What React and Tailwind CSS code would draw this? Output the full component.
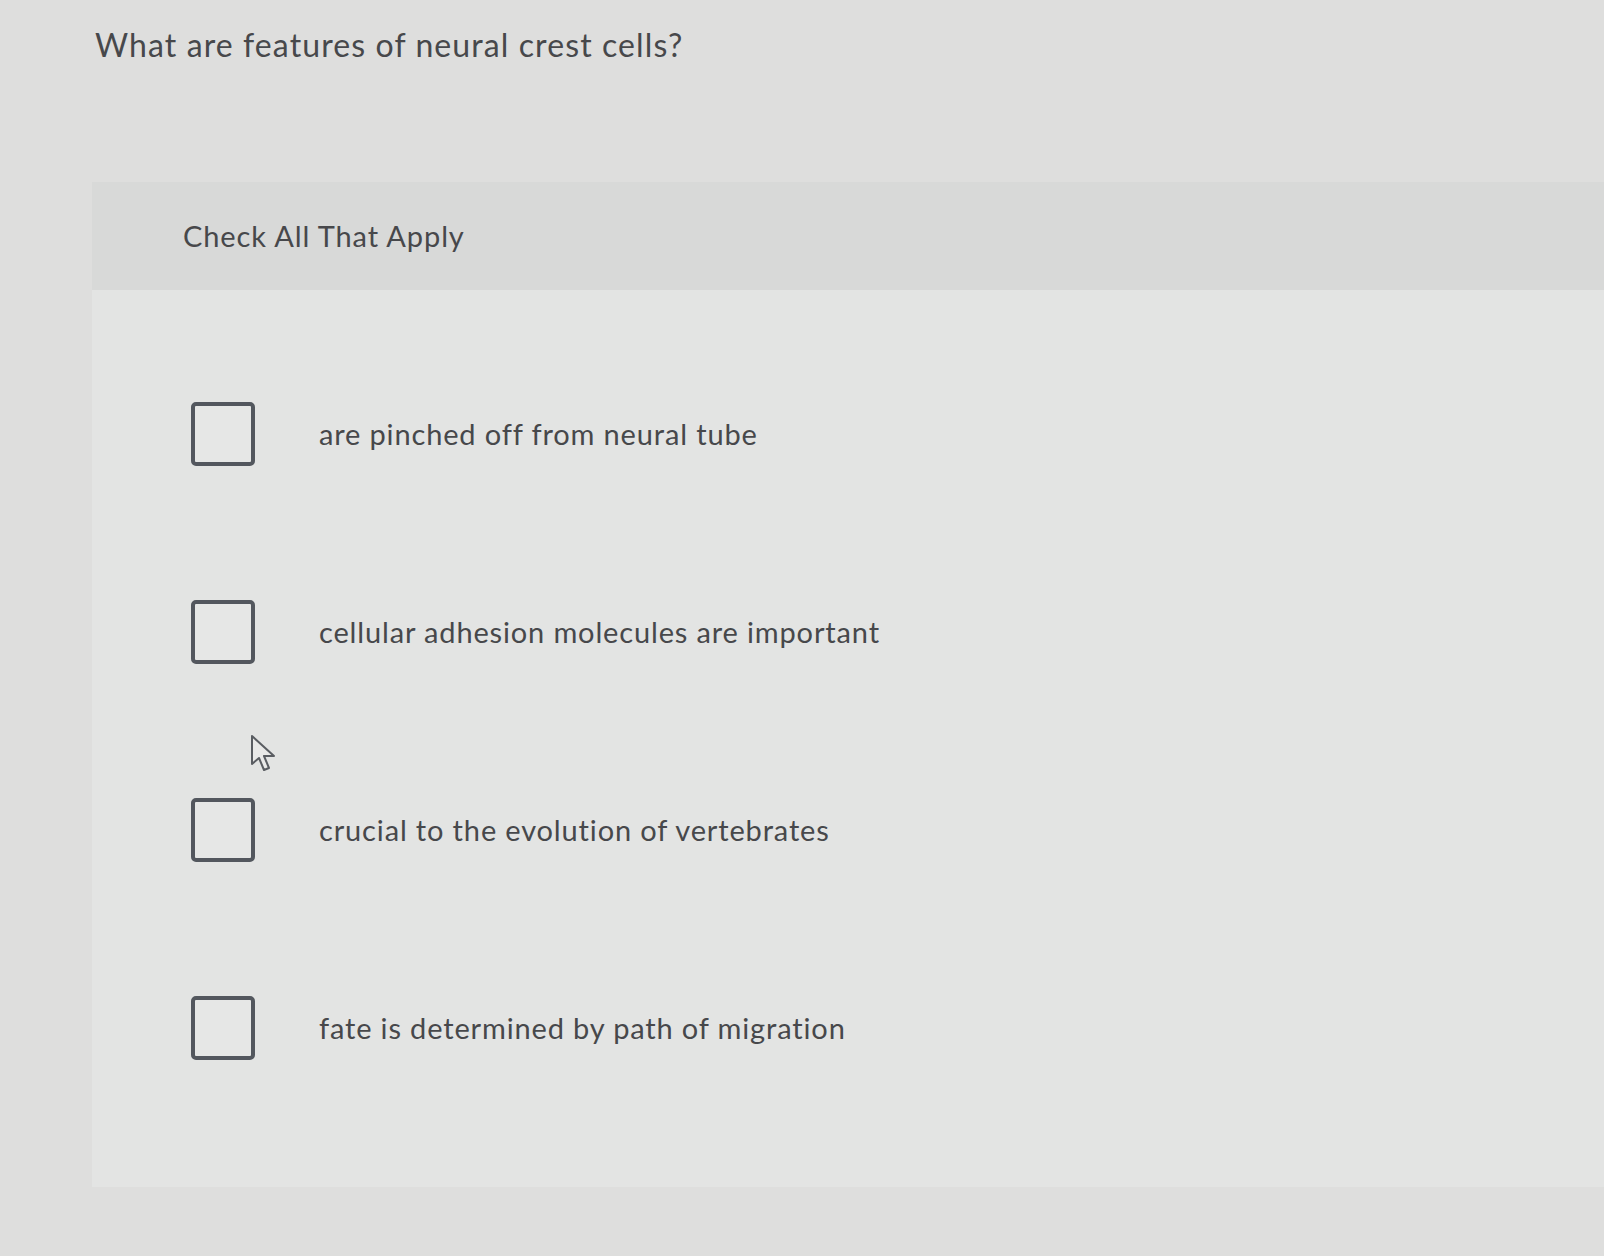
const options = [
  "are pinched off from neural tube",
  "cellular adhesion molecules are important",
  "crucial to the evolution of vertebrates",
  "fate is determined by path of migration",
];

function Cursor() {
  return (
    <svg
      className="absolute left-[250px] top-[734px]"
      width="30"
      height="40"
      viewBox="0 0 30 40"
      fill="none"
    >
      <path
        d="M2 2 L2 30 L9 24 L14 36 L19 34 L14 22 L24 22 Z"
        fill="#e9e9e8"
        stroke="#5a5d62"
        strokeWidth="2"
        strokeLinejoin="round"
      />
    </svg>
  );
}

export default function App() {
  return (
    <div
      className="relative min-h-[1256px] w-full overflow-hidden bg-[#dededd] pt-[25px] text-[#47484b]"
      style={{ fontFamily: "Lato, 'Open Sans', sans-serif" }}
    >
      <h1 className="pl-[95px] text-[32px] leading-[40px] font-normal tracking-[1.1px]">
        What are features of neural crest cells?
      </h1>

      <div className="mt-[117px] ml-[92px] bg-[#e3e4e3]">
        <div className="h-[108px] bg-[#d8d9d8] pl-[91px] pt-[36px]">
          <p className="text-[29px] leading-[36px] tracking-[0.9px]">Check All That Apply</p>
        </div>

        <div className="pt-[45px] pb-[60px] pl-[99px]">
          {options.map((label) => (
            <label key={label} className="flex h-[198px] items-center gap-[64px]">
              <span className="h-[64px] w-[64px] shrink-0 rounded-[5px] border-[4px] border-[#53575e] bg-[#e6e7e6]" />
              <span className="text-[29px] leading-[36px] tracking-[0.85px]">{label}</span>
            </label>
          ))}
        </div>
      </div>

      <Cursor />
    </div>
  );
}
